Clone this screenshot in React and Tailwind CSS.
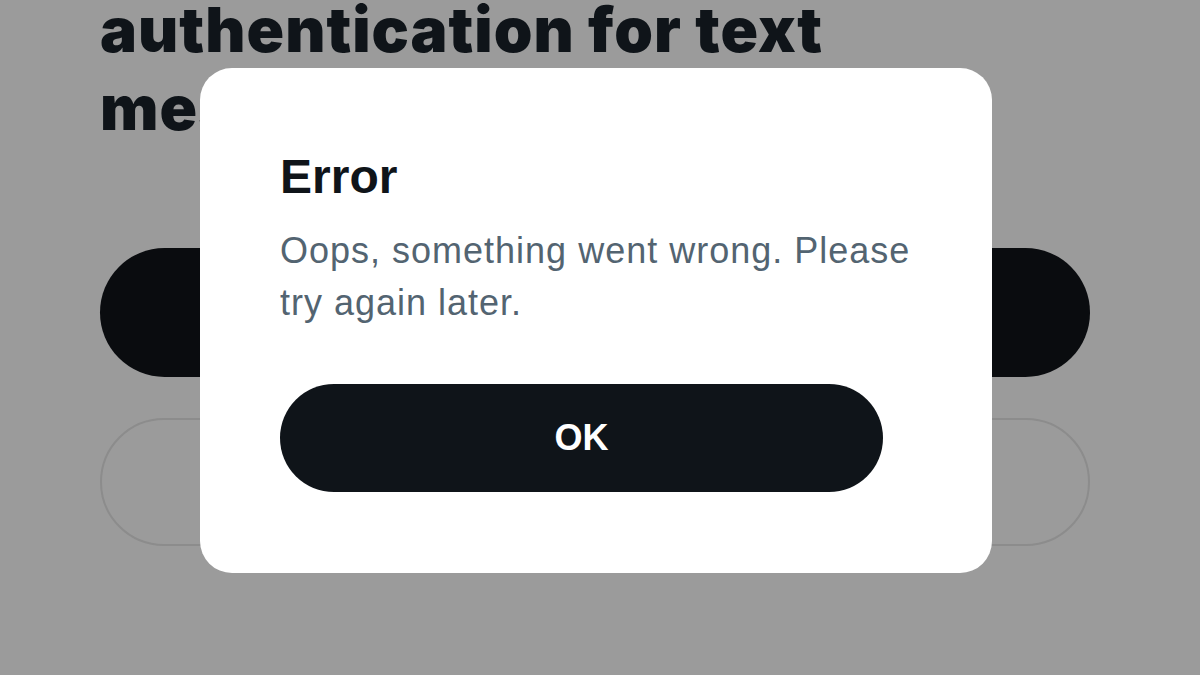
import React from "react";

export default function App() {
  return (
    <div
      className="relative w-[1200px] h-[675px] overflow-hidden bg-[#9b9b9b]"
      style={{ fontFamily: '"Liberation Sans", Arial, sans-serif' }}
    >
      {/* page behind the dim */}
      <div className="px-[100px]">
        <h1
          className="mt-[-9px] text-[62px] leading-[78px] font-black tracking-[1px] text-[#0f1419]"
          style={{ fontFamily: 'Inter, "Liberation Sans", sans-serif' }}
        >
          authentication for text
          <br />
          messages
        </h1>
        <div className="mt-[101px] w-[990px] h-[129px] rounded-full bg-[#0a0c0f]" />
        <div className="mt-[41px] w-[990px] h-[128px] rounded-full border-2 border-[#8c8c8c]" />
      </div>

      {/* dialog */}
      <div className="absolute left-[200px] top-[68px] w-[792px] h-[505px] rounded-[32px] bg-white pl-[80px] pt-[81px]">
        <h2 className="text-[48px] leading-[56px] font-bold text-[#0f1419]">
          Error
        </h2>
        <p className="mt-[20px] w-[640px] text-[36px] leading-[52px] tracking-[1px] text-[#536471]">
          Oops, something went wrong. Please try again later.
        </p>
        <button className="mt-[55px] w-[603px] h-[108px] rounded-full bg-[#0f1419] text-white text-[36px] font-bold flex items-center justify-center">
          OK
        </button>
      </div>
    </div>
  );
}
